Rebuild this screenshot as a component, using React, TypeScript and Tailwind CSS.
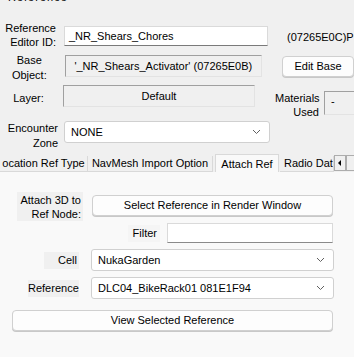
import React from 'react';

const Chevron = () => (
  <svg width="9" height="6" viewBox="0 0 9 6" className="shrink-0">
    <path d="M1 1 L4.5 4.5 L8 1" fill="none" stroke="#606060" strokeWidth="1" />
  </svg>
);

function Combo({ value, width }: { value: string; width: string }) {
  return (
    <div
      className={`${width} h-[22px] bg-white border border-[#d0d0d0] rounded-[3px] flex items-center justify-between pl-[6px] pr-[8px]`}
    >
      <span>{value}</span>
      <Chevron />
    </div>
  );
}

function WinButton({ label, width }: { label: string; width: string }) {
  return (
    <div
      className={`${width} h-[21px] bg-[#fdfdfd] border border-[#d0d0d0] rounded-[4px] shadow-[0_1px_0_#c8c8c8] flex items-center justify-center whitespace-nowrap`}
    >
      {label}
    </div>
  );
}

const tabs = [
  { label: 'ocation Ref Type', w: 'w-[88px]', active: false },
  { label: 'NavMesh Import Option', w: 'w-[125px]', active: false },
  { label: 'Attach Ref', w: 'w-[64px]', active: true },
  { label: 'Radio Data', w: 'w-[54px]', active: false },
];

export default function App() {
  return (
    <div className="w-[354px] h-[357px] overflow-hidden bg-[#f0f0f0] text-[11px] text-black font-['Liberation_Sans',Arial,sans-serif] flex flex-col">
      {/* clipped group title */}
      <div className="h-[4px] overflow-hidden pl-[8px]">
        <div className="mt-[-9px] tracking-[1px] leading-[13px]">Reference</div>
      </div>

      {/* Editor ID */}
      <div className="flex items-start mt-[17px] h-[32px]">
        <div className="w-[56px] text-right leading-[14px] whitespace-nowrap">
          Reference
          <br />
          Editor ID:
        </div>
        <div className="ml-[8px] mt-[5px] w-[204px] h-[20px] bg-white border border-[#dadada] border-b-[#7a7a7a] flex items-center pl-[4px]">
          _NR_Shears_Chores
        </div>
        <div className="ml-[19px] mt-[8px] whitespace-nowrap">(07265E0C)P</div>
      </div>

      {/* Base Object */}
      <div className="flex items-start h-[32px]">
        <div className="w-[60px] text-center leading-[15px]">
          Base
          <br />
          Object:
        </div>
        <div className="ml-[6px] mt-[2px] w-[202px] h-[22px] bg-[#f0f0f0] border border-[#a0a0a0] border-r-[#e3e3e3] border-b-[#e3e3e3] flex items-center justify-center whitespace-nowrap">
          '_NR_Shears_Activator' (07265E0B)
        </div>
        <div className="ml-[20px] mt-[3px] shrink-0">
          <WinButton label="Edit Base" width="w-[72px]" />
        </div>
      </div>

      {/* Layer */}
      <div className="flex items-start h-[34px]">
        <div className="w-[60px] text-center mt-[5px]">Layer:</div>
        <div className="ml-[6px] w-[202px] h-[22px] bg-[#f0f0f0] border border-[#a0a0a0] border-r-[#e3e3e3] border-b-[#e3e3e3] flex items-center justify-center">
          Default
        </div>
        <div className="ml-[20px] mt-[6px] w-[44px] text-right leading-[14px] shrink-0">
          Materials
          <br />
          Used
        </div>
        <div className="ml-[5px] mt-[6px] w-[30px] h-[24px] shrink-0 border border-[#a0a0a0] border-r-0 border-b-[#e3e3e3] bg-[#f0f0f0] pl-[6px] leading-[18px]">
          -
        </div>
      </div>

      {/* Encounter Zone */}
      <div className="flex items-start h-[33px] mt-[2px]">
        <div className="w-[58px] text-right leading-[15px]">
          Encounter
          <br />
          Zone
        </div>
        <div className="ml-[6px]">
          <Combo value="NONE" width="w-[206px]" />
        </div>
      </div>

      {/* Tab strip */}
      <div className="flex items-end h-[18px] overflow-hidden">
        {tabs.map((t) =>
          t.active ? (
            <div
              key={t.label}
              className={`${t.w} h-[18px] shrink-0 bg-[#f9f9f9] border border-b-0 border-[#d9d9d9] flex items-start justify-center pt-[1px] ml-[2px] mr-[1px]`}
            >
              {t.label}
            </div>
          ) : (
            <div
              key={t.label}
              className={`${t.w} h-[16px] shrink-0 bg-[#f0f0f0] border-r border-[#d9d9d9] border-b flex items-center justify-center whitespace-nowrap overflow-hidden`}
            >
              <span className={t.label === 'Radio Data' ? 'pl-[4px] w-full' : ''}>{t.label}</span>
            </div>
          )
        )}
        <div className="h-[16px] w-[12px] shrink-0 bg-[#f0f0f0] border border-[#adadad] flex items-center justify-center self-center">
          <svg width="4" height="6" viewBox="0 0 4 6">
            <path d="M3 0 L0 3 L3 6 Z" fill="#000" />
          </svg>
        </div>
        <div className="h-[16px] w-[12px] shrink-0 bg-[#f0f0f0] border border-[#adadad] self-center" />
      </div>

      {/* Tab page */}
      <div className="flex-1 bg-[#f9f9f9]">
        <div className="flex items-start mt-[20px]">
          <div className="ml-[17px] w-[66px] h-[29px] bg-[#f0f0f0] text-right leading-[14px] pr-[2px] pt-[1px] whitespace-nowrap">
            Attach 3D to
            <br />
            Ref Node:
          </div>
          <div className="ml-[9px] mt-[3px]">
            <WinButton label="Select Reference in Render Window" width="w-[241px]" />
          </div>
        </div>

        <div className="flex items-center mt-[2px]">
          <div className="ml-[128px] w-[32px] h-[17px] bg-[#f5f5f5] text-right pr-[3px] leading-[17px]">Filter</div>
          <div className="ml-[7px] w-[166px] h-[20px] bg-white border border-[#dadada] border-b-[#8a8a8a]" />
        </div>

        <div className="flex items-center mt-[6px]">
          <div className="ml-[44px] w-[35px] h-[17px] bg-[#f0f0f0] text-right pr-[2px] leading-[17px]">Cell</div>
          <div className="ml-[12px]">
            <Combo value="NukaGarden" width="w-[243px]" />
          </div>
        </div>

        <div className="flex items-center mt-[6px]">
          <div className="ml-[28px] w-[51px] h-[17px] bg-[#f0f0f0] text-right pr-[2px] leading-[17px]">Reference</div>
          <div className="ml-[12px]">
            <Combo value="DLC04_BikeRack01 081E1F94" width="w-[243px]" />
          </div>
        </div>

        <div className="ml-[12px] mt-[11px]">
          <WinButton label="View Selected Reference" width="w-[321px]" />
        </div>
      </div>
    </div>
  );
}
